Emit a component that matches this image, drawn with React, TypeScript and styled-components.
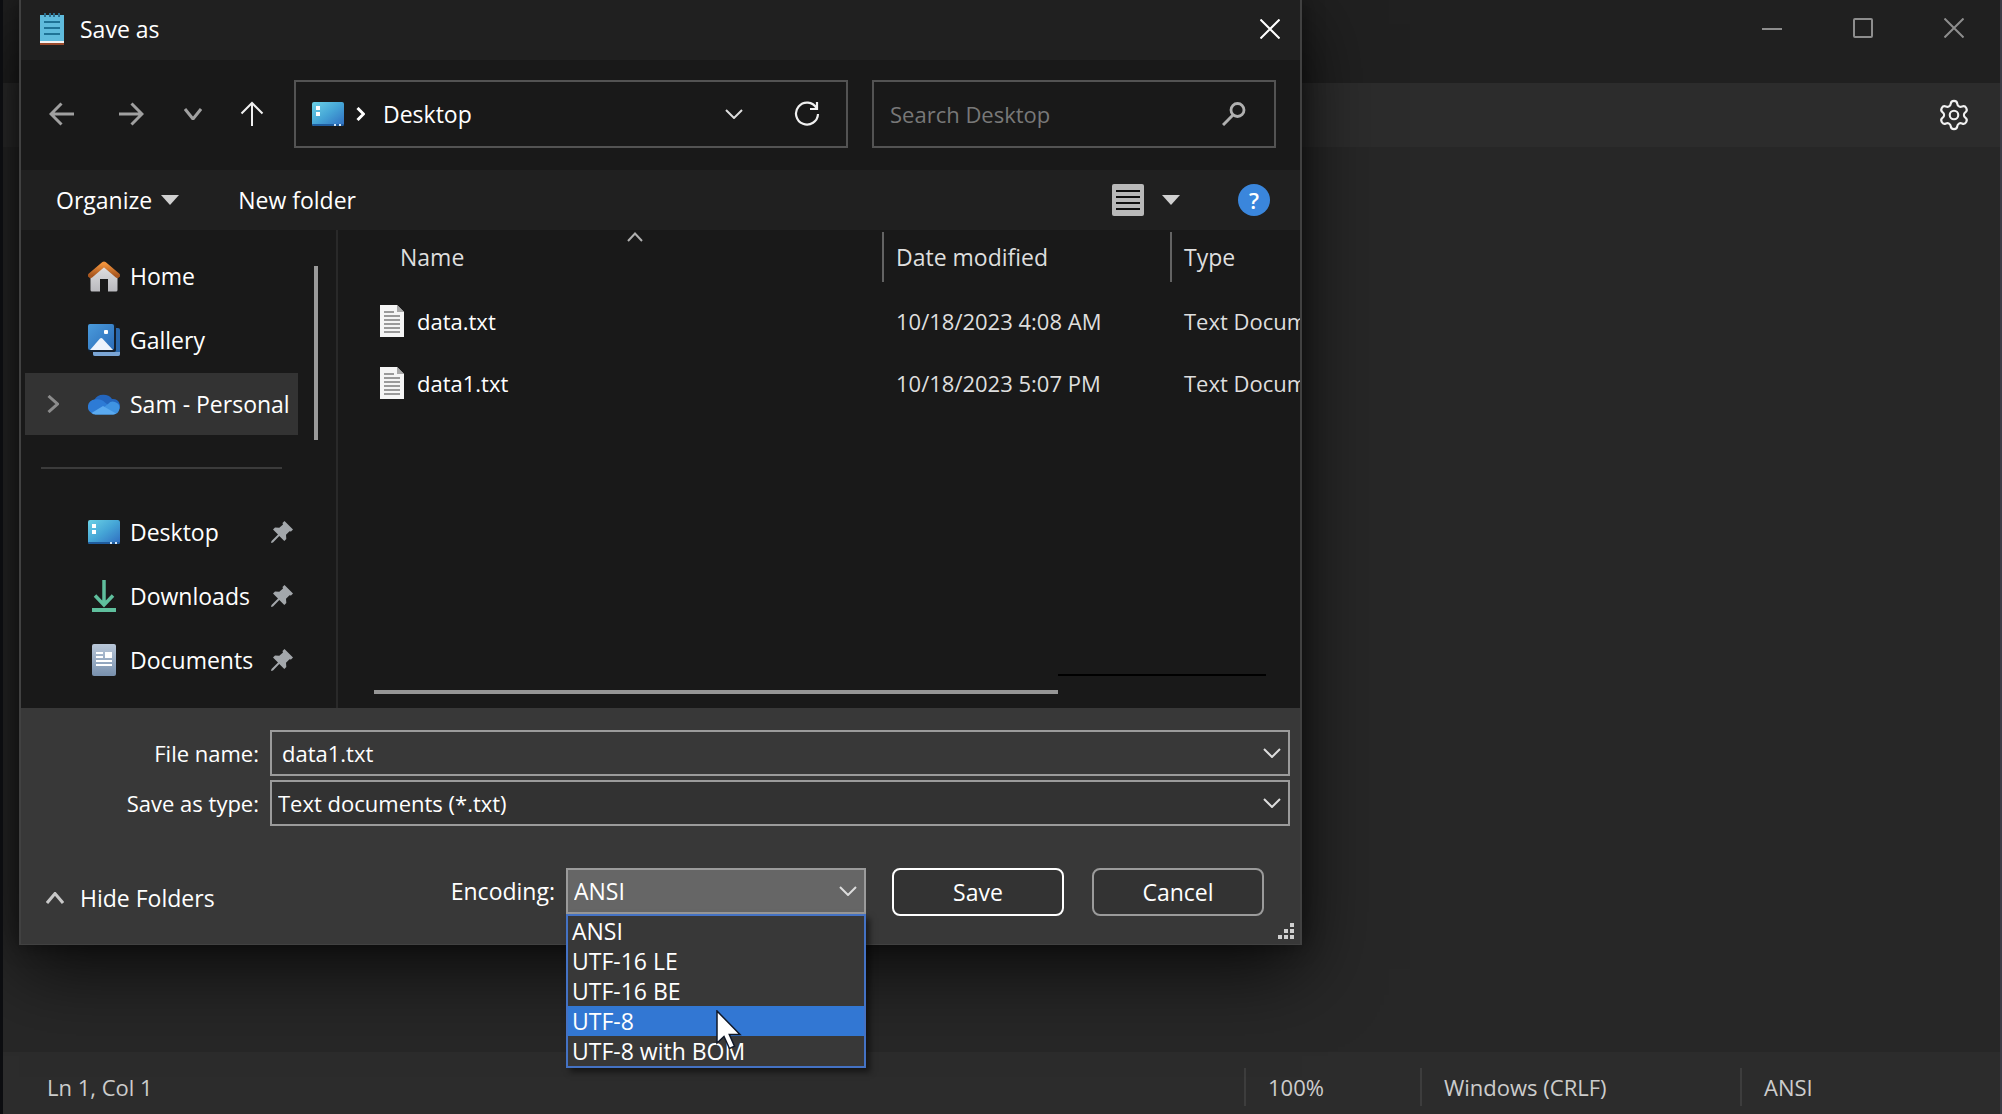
import React, { useState } from "react";
import styled, { createGlobalStyle, css } from "styled-components";
import { Settings } from "lucide-react";

const GlobalStyle = createGlobalStyle`
  *, *::before, *::after { box-sizing: border-box; }
  html, body, #root { height: 100%; }
  body {
    margin: 0;
    background: #272727;
    color: #ffffff;
    font-family: "Open Sans", "Noto Sans", sans-serif;
    font-size: 23px;
    line-height: 30px;
    overflow: hidden;
  }
  button, input, select {
    font: inherit;
    color: inherit;
    margin: 0;
    padding: 0;
    border: 0;
    border-radius: 0;
    background: none;
    outline: none;
  }
  svg { display: block; flex: none; }
`;

/* ---------- Editor window ---------- */

const EditorWindow = styled.div`
  position: relative;
  display: flex;
  flex-direction: column;
  min-height: 100vh;
  border-left: 3px solid #0c0d10;
  border-right: 2px solid #3c3c46;
  background: #272727;
  overflow: hidden;
`;

const EditorTitle = styled.header`
  display: flex;
  justify-content: flex-end;
  gap: 71px;
  height: 83px;
  padding: 18px 36px 0 0;
  background: #202020;
`;

const WindowButton = styled.button`
  width: 20px;
  height: 20px;
  color: #8d8d8d;
`;

const EditorMenu = styled.div`
  display: flex;
  align-items: center;
  justify-content: flex-end;
  height: 64px;
  padding-right: 29px;
  background: #2c2c2c;
`;

const EditorPage = styled.main`
  flex: 1;
`;

const StatusBar = styled.footer`
  display: flex;
  align-items: center;
  height: 62px;
  padding: 8px 0 0 44px;
  background: #2c2c2c;
  color: #cccccc;
  font-size: 22px;
`;

const StatusSpacer = styled.div`
  flex: 1;
`;

const StatusItem = styled.div<{ $width: number }>`
  display: flex;
  align-items: center;
  width: ${(p) => p.$width}px;
  height: 38px;
  padding-left: 22px;
  border-left: 2px solid #3d3d3d;
`;

/* ---------- Dialog frame ---------- */

const Dialog = styled.section`
  position: absolute;
  top: 0;
  left: 16px;
  right: 698px;
  border: 2px solid #414141;
  border-top: 0;
  border-bottom-width: 1px;
  background: #191919;
  box-shadow: 0 24px 72px rgba(0, 0, 0, 0.72), 0 0 20px rgba(0, 0, 0, 0.4);
`;

const TitleBar = styled.header`
  display: flex;
  align-items: center;
  gap: 16px;
  height: 60px;
  padding: 0 19px 2px 19px;
  background: #202020;
`;

const DialogTitle = styled.h1`
  flex: 1;
  margin: 0;
  font-size: inherit;
  font-weight: 400;
`;

const IconButton = styled.button<{ $width: number }>`
  display: flex;
  flex: none;
  align-items: center;
  justify-content: center;
  width: ${(p) => p.$width}px;
  height: 40px;
`;

const NavBar = styled.div`
  display: flex;
  align-items: center;
  height: 110px;
  padding: 0 24px 2px 25px;
`;

const NavButtons = styled.div`
  display: flex;
  align-items: center;
  gap: 37px;
`;

const boxFrame = css`
  display: flex;
  align-items: center;
  height: 68px;
  border: 2px solid #535353;
`;

const AddressBox = styled.div`
  ${boxFrame}
  flex: 1;
  margin: 0 24px 0 29px;
  padding: 0 5px 0 16px;
  gap: 12px;
`;

const Crumb = styled.a`
  flex: 1;
  margin-left: 6px;
  color: inherit;
  text-decoration: none;
`;

const SearchBox = styled.label`
  ${boxFrame}
  flex: none;
  width: 404px;
  padding: 0 28px 0 16px;
`;

const SearchInput = styled.input`
  flex: 1;
  min-width: 0;
  font-size: 22px;
  &::placeholder { color: #787878; opacity: 1; }
`;

const Toolbar = styled.div`
  display: flex;
  align-items: center;
  height: 60px;
  padding: 0 30px 0 35px;
  background: #202020;
`;

const ToolButton = styled.button`
  display: flex;
  align-items: center;
  gap: 9px;
  margin-right: 59px;
`;

const ToolSpacer = styled.div`
  flex: 1;
`;

const ViewButton = styled.button`
  display: flex;
  align-items: center;
  gap: 18px;
  margin-right: 58px;
`;

/* ---------- Folder tree ---------- */

const Browser = styled.div`
  display: flex;
`;

const Sidebar = styled.nav`
  display: flex;
  flex: none;
  gap: 16px;
  width: 317px;
  padding: 0 18px 0 4px;
  border-right: 2px solid #292929;
`;

const FolderList = styled.div`
  display: flex;
  flex-direction: column;
  flex: 1;
  gap: 2px;
  padding: 15px 0 17px;
`;

const Folder = styled.button<{ $active?: boolean }>`
  display: flex;
  align-items: center;
  height: 62px;
  padding: 0 5px 0 22px;
  text-align: left;
  white-space: nowrap;
  background: ${(p) => (p.$active ? "#333333" : "transparent")};
`;

const Expander = styled.span`
  width: 41px;
`;

const FolderName = styled.span`
  flex: 1;
  margin-left: 10px;
`;

const Separator = styled.div`
  display: flex;
  align-items: center;
  height: 62px;
  padding: 0 16px;
  &::before {
    content: "";
    flex: 1;
    height: 2px;
    background: #3b3b3b;
  }
`;

const SideThumb = styled.div`
  width: 4px;
  height: 174px;
  margin-top: 36px;
  background: #9a9a9a;
`;

/* ---------- File table ---------- */

const FilePane = styled.div`
  display: flex;
  flex-direction: column;
  flex: 1;
  min-width: 0;
`;

const FileArea = styled.div`
  flex: 1;
  padding-left: 36px;
  overflow: hidden;
`;

const FileTable = styled.table`
  width: 100%;
  min-width: 1098px;
  table-layout: fixed;
  border-collapse: collapse;
  white-space: nowrap;
`;

const Column = styled.col<{ $width: number }>`
  width: ${(p) => p.$width}px;
`;

const HeadCell = styled.th`
  padding: 2px 0 8px;
  font-weight: 400;
`;

const HeadButton = styled.button<{ $indent: number }>`
  position: relative;
  display: block;
  width: 100%;
  height: 50px;
  padding-left: ${(p) => p.$indent}px;
  border-right: 2px solid #636363;
  color: #dedede;
  text-align: left;
`;

const SortMark = styled.span`
  position: absolute;
  top: 0;
  left: 253px;
`;

const Cell = styled.td`
  height: 62px;
  padding: 0 0 0 12px;
  color: #dedede;
  font-size: 22px;
`;

const NameCell = styled(Cell)`
  padding-left: 6px;
  color: #ffffff;
`;

const FileName = styled.span`
  display: flex;
  align-items: center;
  gap: 13px;
`;

const ScrollRow = styled.div`
  display: flex;
  height: 34px;
  padding: 0 34px 0 36px;
`;

const ScrollThumb = styled.div`
  flex: 1;
  height: 4px;
  margin-top: 16px;
  background: #969696;
`;

const ScrollRest = styled.div`
  width: 208px;
  height: 2px;
  background: #000000;
`;

/* ---------- Dialog footer ---------- */

const Footer = styled.form`
  position: relative;
  padding: 22px 10px 28px 25px;
  background: #383838;
`;

const Fields = styled.div`
  display: grid;
  grid-template-columns: 213px 1fr;
  column-gap: 11px;
  row-gap: 4px;
  align-items: center;
  font-size: 22px;
`;

const FieldLabel = styled.label`
  text-align: right;
  white-space: nowrap;
`;

const NameField = styled.div`
  display: flex;
  align-items: center;
  height: 46px;
  padding: 0 7px 0 10px;
  border: 2px solid #9b9b9b;
`;

const NameInput = styled.input`
  flex: 1;
  min-width: 0;
`;

const SelectWrap = styled.div<{ $width?: string }>`
  position: relative;
  width: ${(p) => p.$width ?? "100%"};
`;

const Select = styled.select<{ $open?: boolean }>`
  display: block;
  appearance: none;
  width: 100%;
  height: 46px;
  padding: 0 30px 0 6px;
  border: 2px solid #9b9b9b;
  background: ${(p) => (p.$open ? "#666666" : "#323232")};
`;

const SelectArrow = styled.span`
  position: absolute;
  top: 18px;
  right: 9px;
  pointer-events: none;
`;

const Options = styled.ul`
  position: absolute;
  top: 46px;
  left: 0;
  right: 0;
  z-index: 2;
  margin: 0;
  padding: 0;
  list-style: none;
  border: 2px solid #4472c4;
  background: #383838;
  box-shadow: 4px 4px 6px rgba(0, 0, 0, 0.5);
`;

const Option = styled.li<{ $selected: boolean }>`
  height: 30px;
  padding-left: 4px;
  background: ${(p) => (p.$selected ? "#3277d3" : "transparent")};
`;

const Pointer = styled.span`
  position: absolute;
  top: 94px;
  left: 148px;
`;

const Actions = styled.div`
  display: flex;
  align-items: flex-start;
  margin-top: 42px;
  padding-right: 26px;
`;

const HideFolders = styled.button`
  display: flex;
  align-items: center;
  gap: 16px;
  margin: 15px auto 0 0;
`;

const EncodingLabel = styled.label`
  margin-right: 11px;
  line-height: 46px;
`;

const ActionButton = styled.button<{ $primary?: boolean }>`
  width: 172px;
  height: 48px;
  margin-left: ${(p) => (p.$primary ? 26 : 28)}px;
  border: 2px solid ${(p) => (p.$primary ? "#ffffff" : "#9b9b9b")};
  border-radius: 8px;
  background: #333333;
`;

const Grip = styled.span`
  position: absolute;
  right: 6px;
  bottom: 5px;
`;

const HelpBadge = styled.button`
  width: 32px;
  height: 32px;
  border-radius: 50%;
  background: #3a86dc;
  font-size: 22px;
  font-weight: 600;
  line-height: 32px;
`;

/* ---------- Drawings ---------- */

interface ChevronProps {
  dir: "up" | "down" | "right";
  w?: number;
  h?: number;
  color?: string;
  stroke?: number;
}

const Chevron = ({ dir, w = 18, h = 10, color = "#dddddd", stroke = 2 }: ChevronProps) => {
  const paths = {
    down: `M1 1L${w / 2} ${h - 1}L${w - 1} 1`,
    up: `M1 ${h - 1}L${w / 2} 1.5L${w - 1} ${h - 1}`,
    right: `M1.5 1L${w - 1.5} ${h / 2}L1.5 ${h - 1}`,
  };
  return (
    <svg width={w} height={h} viewBox={`0 0 ${w} ${h}`} fill="none" stroke={color} strokeWidth={stroke}>
      <path d={paths[dir]} />
    </svg>
  );
};

const Arrow = ({ turn, color, stroke }: { turn: number; color: string; stroke: number }) => (
  <svg width="26" height="26" viewBox="0 0 26 26" fill="none" stroke={color} strokeWidth={stroke}>
    <path transform={`rotate(${turn} 13 13)`} d="M25 13H2.5M12.5 2.5L2 13l10.500 10.5" />
  </svg>
);

const Cross = () => (
  <svg width="20" height="20" viewBox="0 0 20 20" stroke="currentColor" strokeWidth="2">
    <path d="M.5.5l19 19M19.5.5l-19 19" />
  </svg>
);

const Triangle = () => (
  <svg width="18" height="10" viewBox="0 0 18 10">
    <path d="M0 0h18L9 10z" fill="#d0d0d0" />
  </svg>
);

const NotepadIcon = () => (
  <svg width="24" height="32" viewBox="0 0 24 32">
    <rect y="2" width="24" height="26" fill="#5fbbdc" />
    <rect y="28" width="24" height="2" fill="#f3f3f3" />
    <rect y="30" width="24" height="2" fill="#9a4a2c" />
    <path d="M5 0v4M10 0v4M14 0v4M19 0v4" stroke="#2d6f8e" strokeWidth="2" />
    <path d="M4 9h16M4 15h16M4 21h16" stroke="#1f7396" strokeWidth="2" />
  </svg>
);

const DesktopIcon = () => (
  <svg width="32" height="24" viewBox="0 0 32 24">
    <defs>
      <linearGradient id="desk" x1="0" y1="0" x2="1" y2="1">
        <stop offset="0" stopColor="#6cd2e6" />
        <stop offset="0.5" stopColor="#45a5d6" />
        <stop offset="1" stopColor="#2f6cc0" />
      </linearGradient>
    </defs>
    <rect width="32" height="24" rx="2" fill="url(#desk)" />
    <path d="M0 22h32a2 2 0 0 1-2 2H2a2 2 0 0 1-2-2z" fill="#1f5c9e" />
    <path d="M4 4h4v4H4zM4 10h4v4H4z" fill="#ffffff" />
    <path d="M22 22h2v2h-2zM27 22h2v2h-2z" fill="#cfe6fa" />
  </svg>
);

const HomeIcon = () => (
  <svg width="32" height="32" viewBox="0 0 32 32">
    <defs>
      <linearGradient id="wall" x1="0" y1="0" x2="0" y2="1">
        <stop offset="0" stopColor="#e4e4e6" />
        <stop offset="1" stopColor="#b9b9bd" />
      </linearGradient>
      <linearGradient id="roof" x1="0" y1="0" x2="0" y2="1">
        <stop offset="0" stopColor="#f0923c" />
        <stop offset="1" stopColor="#a8561f" />
      </linearGradient>
    </defs>
    <path d="M2.5 14L16 3l13.500 11v16a1.500 1.500 0 0 1-1.500 1.500h-8V19h-8v12.500H4A1.500 1.500 0 0 1 2.500 30z" fill="url(#wall)" />
    <path d="M2.500 15.500L16 4l13.500 11.500" fill="none" stroke="url(#roof)" strokeWidth="5" strokeLinecap="round" strokeLinejoin="round" />
  </svg>
);

const GalleryIcon = () => (
  <svg width="32" height="32" viewBox="0 0 32 32">
    <defs>
      <linearGradient id="photo" x1="0" y1="0" x2="1" y2="1">
        <stop offset="0" stopColor="#4a9bdc" />
        <stop offset="1" stopColor="#2b6cb8" />
      </linearGradient>
    </defs>
    <path d="M8 4h22a2 2 0 0 1 2 2v24a2 2 0 0 1-2 2H7a2 2 0 0 1-2-2z" fill="#2a68ac" />
    <path d="M5 28h27v2a2 2 0 0 1-2 2H7a2 2 0 0 1-2-2z" fill="#7ba6d6" />
    <rect width="28" height="28" rx="2" fill="#14202e" />
    <rect width="26" height="26" rx="2" fill="url(#photo)" />
    <rect x="16" y="6" width="4" height="4" rx="1" fill="#ffffff" />
    <path d="M2 26L12 14.500q1.200-1.200 2.400 0L25 26z" fill="#eef4fc" />
  </svg>
);

const CloudIcon = () => (
  <svg width="32" height="22" viewBox="0 0 32 22">
    <path d="M8 20a8 7 0 0 1-1.500-13.500A10 8.500 0 0 1 24 6a7 7 0 0 1 2 14z" fill="#2365bd" />
    <path d="M7 6.500q6-1 10 3l9 7-20 4.500A7.300 7.300 0 0 1 7 6.500z" fill="#2d7bd6" />
    <path d="M6.500 21.500L20 11q3-3.500 7-2a6.400 6.400 0 0 1-2 12.500H8a8 8 0 0 1-4-1z" fill="#3f93e2" />
    <path d="M3.500 20l11.500-7 13 7.500q-1.500 1-3 1H8q-3 0-4.500-1.500z" fill="#5aaaf0" />
  </svg>
);

const DownloadIcon = () => (
  <svg width="32" height="32" viewBox="0 0 32 32" fill="none" stroke="#5fbf9d">
    <path d="M16 0v25M7 15.500l9 9.500 9-9.500" strokeWidth="3.5" />
    <path d="M4 30h24" strokeWidth="4" />
  </svg>
);

const DocumentIcon = () => (
  <svg width="32" height="32" viewBox="0 0 32 32">
    <defs>
      <linearGradient id="doc" x1="0" y1="0" x2="0" y2="1">
        <stop offset="0" stopColor="#b9c7d8" />
        <stop offset="1" stopColor="#7890ad" />
      </linearGradient>
    </defs>
    <rect x="4" width="24" height="32" rx="2" fill="url(#doc)" />
    <path d="M8 9h7M8 13h7M8 17h16M8 21h16" stroke="#ffffff" strokeWidth="2" />
    <rect x="17" y="8" width="7" height="6" fill="#ffffff" />
  </svg>
);

const TextFileIcon = () => (
  <svg width="24" height="32" viewBox="0 0 24 32">
    <path d="M0 0h17l7 7v25H0z" fill="#f5f5f5" />
    <path d="M17 0v7h7z" fill="#a8a8a8" />
    <path d="M4 7h10M4 11h16M4 15h16M4 19h16M4 23h16M4 27h16" stroke="#9a9a9a" strokeWidth="2" />
  </svg>
);

const PinIcon = () => (
  <svg width="22" height="22" viewBox="0 0 22 22">
    <path d="M13.500 0L22 8.500l-2 2-1.500-.3-3.500 3.600.3 4.200-2 2-5-5L2 21.500 0 22l.5-2L7 13.500l-5-5 2-2 4.300.3L12 3.400 11.500 2z" fill="#a3a7ab" />
  </svg>
);

const ViewIcon = () => (
  <svg width="32" height="32" viewBox="0 0 32 32">
    <rect width="32" height="32" rx="2" fill="#b9b9b9" />
    <path d="M4 7h24M4 13h24M4 19h24M4 25h24" stroke="#101010" strokeWidth="2" />
  </svg>
);

const RefreshIcon = () => (
  <svg width="26" height="26" viewBox="0 0 26 26" fill="none" stroke="#f0f0f0" strokeWidth="2.2">
    <path d="M22.500 7A11 11 0 1 0 24 13" />
    <path d="M23 1v7h-7" />
  </svg>
);

const SearchIcon = () => (
  <svg width="24" height="24" viewBox="0 0 24 24" fill="none" stroke="#b0b0b0">
    <circle cx="15.5" cy="8" r="6.5" strokeWidth="2.8" />
    <path d="M11 13L1 23" strokeWidth="3" />
  </svg>
);

const CursorIcon = () => (
  <svg width="26" height="40" viewBox="0 0 26 40">
    <path d="M1 1v32l7-6.500 5.500 12 5-2.300L13.300 24.500H24z" fill="#ffffff" stroke="#101828" strokeWidth="1.5" />
  </svg>
);

/* ---------- Data ---------- */

const pinned = [
  { name: "Desktop", icon: <DesktopIcon /> },
  { name: "Downloads", icon: <DownloadIcon /> },
  { name: "Documents", icon: <DocumentIcon /> },
];

const files = [
  { name: "data.txt", date: "10/18/2023 4:08 AM", type: "Text Document" },
  { name: "data1.txt", date: "10/18/2023 5:07 PM", type: "Text Document" },
];

const encodings = ["ANSI", "UTF-16 LE", "UTF-16 BE", "UTF-8", "UTF-8 with BOM"];

export default function App() {
  const [fileName, setFileName] = useState("data1.txt");
  const [hovered, setHovered] = useState("UTF-8");
  const [encoding, setEncoding] = useState("ANSI");

  return (
    <>
      <GlobalStyle />
      <EditorWindow>
        <EditorTitle>
          <WindowButton aria-label="Minimize">
            <svg width="20" height="20"><path d="M0 11h20" stroke="currentColor" strokeWidth="2" /></svg>
          </WindowButton>
          <WindowButton aria-label="Maximize">
            <svg width="20" height="20"><rect x="1" y="1" width="18" height="18" rx="1" fill="none" stroke="currentColor" strokeWidth="2" /></svg>
          </WindowButton>
          <WindowButton aria-label="Close window"><Cross /></WindowButton>
        </EditorTitle>
        <EditorMenu>
          <IconButton $width={34} aria-label="Settings">
            <Settings size={34} strokeWidth={1.5} color="#f0f0f0" />
          </IconButton>
        </EditorMenu>
        <EditorPage />
        <StatusBar>
          <span>Ln 1, Col 1</span>
          <StatusSpacer />
          <StatusItem $width={176}>100%</StatusItem>
          <StatusItem $width={320}>Windows (CRLF)</StatusItem>
          <StatusItem $width={260}>ANSI</StatusItem>
        </StatusBar>

        <Dialog role="dialog" aria-label="Save as">
          <TitleBar>
            <NotepadIcon />
            <DialogTitle>Save as</DialogTitle>
            <IconButton $width={22} aria-label="Close"><Cross /></IconButton>
          </TitleBar>

          <NavBar>
            <NavButtons>
              <IconButton $width={32} aria-label="Back"><Arrow turn={0} color="#a0a0a0" stroke={3} /></IconButton>
              <IconButton $width={32} aria-label="Forward"><Arrow turn={180} color="#a0a0a0" stroke={3} /></IconButton>
              <IconButton $width={18} aria-label="Recent locations"><Chevron dir="down" color="#a0a0a0" stroke={3} h={12} /></IconButton>
              <IconButton $width={26} aria-label="Up"><Arrow turn={90} color="#f0f0f0" stroke={2} /></IconButton>
            </NavButtons>
            <AddressBox>
              <DesktopIcon />
              <Chevron dir="right" w={9} h={14} color="#ffffff" stroke={3} />
              <Crumb href="#desktop">Desktop</Crumb>
              <IconButton $width={54} aria-label="Previous locations"><Chevron dir="down" /></IconButton>
              <IconButton $width={68} aria-label="Refresh"><RefreshIcon /></IconButton>
            </AddressBox>
            <SearchBox>
              <SearchInput type="text" placeholder="Search Desktop" aria-label="Search Desktop" />
              <SearchIcon />
            </SearchBox>
          </NavBar>

          <Toolbar>
            <ToolButton>Organize <Triangle /></ToolButton>
            <ToolButton>New folder</ToolButton>
            <ToolSpacer />
            <ViewButton aria-label="Change view"><ViewIcon /><Triangle /></ViewButton>
            <HelpBadge>?</HelpBadge>
          </Toolbar>

          <Browser>
            <Sidebar>
              <FolderList>
                <Folder><Expander /><HomeIcon /><FolderName>Home</FolderName></Folder>
                <Folder><Expander /><GalleryIcon /><FolderName>Gallery</FolderName></Folder>
                <Folder $active>
                  <Expander><Chevron dir="right" w={12} h={18} color="#8c8c8c" stroke={3} /></Expander>
                  <CloudIcon />
                  <FolderName>Sam - Personal</FolderName>
                </Folder>
                <Separator />
                {pinned.map((p) => (
                  <Folder key={p.name}><Expander />{p.icon}<FolderName>{p.name}</FolderName><PinIcon /></Folder>
                ))}
              </FolderList>
              <SideThumb />
            </Sidebar>

            <FilePane>
              <FileArea>
                <FileTable>
                  <colgroup><Column $width={510} /><Column $width={288} /><Column $width={300} /></colgroup>
                  <thead>
                    <tr>
                      <HeadCell scope="col">
                        <HeadButton $indent={26}>Name<SortMark><Chevron dir="up" w={16} color="#b0b0b0" /></SortMark></HeadButton>
                      </HeadCell>
                      <HeadCell scope="col"><HeadButton $indent={12}>Date modified</HeadButton></HeadCell>
                      <HeadCell scope="col"><HeadButton $indent={12}>Type</HeadButton></HeadCell>
                    </tr>
                  </thead>
                  <tbody>
                    {files.map((f) => (
                      <tr key={f.name}>
                        <NameCell><FileName><TextFileIcon />{f.name}</FileName></NameCell>
                        <Cell>{f.date}</Cell>
                        <Cell>{f.type}</Cell>
                      </tr>
                    ))}
                  </tbody>
                </FileTable>
              </FileArea>
              <ScrollRow><ScrollThumb /><ScrollRest /></ScrollRow>
            </FilePane>
          </Browser>

          <Footer onSubmit={(e) => e.preventDefault()}>
            <Fields>
              <FieldLabel htmlFor="file-name">File name:</FieldLabel>
              <NameField>
                <NameInput id="file-name" type="text" value={fileName} onChange={(e) => setFileName(e.target.value)} />
                <IconButton type="button" $width={18} aria-label="Recent names"><Chevron dir="down" /></IconButton>
              </NameField>
              <FieldLabel htmlFor="file-type">Save as type:</FieldLabel>
              <SelectWrap>
                <Select id="file-type"><option>Text documents (*.txt)</option></Select>
                <SelectArrow><Chevron dir="down" /></SelectArrow>
              </SelectWrap>
            </Fields>
            <Actions>
              <HideFolders type="button"><Chevron dir="up" h={12} stroke={3} color="#c8c8c8" />Hide Folders</HideFolders>
              <EncodingLabel htmlFor="encoding">Encoding:</EncodingLabel>
              <SelectWrap $width="300px">
                <Select id="encoding" $open value={encoding} onChange={(e) => setEncoding(e.target.value)}>
                  {encodings.map((e) => <option key={e}>{e}</option>)}
                </Select>
                <SelectArrow><Chevron dir="down" /></SelectArrow>
                <Options role="listbox" aria-label="Encoding">
                  {encodings.map((e) => (
                    <Option
                      key={e}
                      role="option"
                      aria-selected={e === hovered}
                      $selected={e === hovered}
                      onMouseEnter={() => setHovered(e)}
                      onClick={() => setEncoding(e)}
                    >
                      {e}
                    </Option>
                  ))}
                  <Pointer><CursorIcon /></Pointer>
                </Options>
              </SelectWrap>
              <ActionButton type="submit" $primary>Save</ActionButton>
              <ActionButton type="button">Cancel</ActionButton>
            </Actions>
            <Grip>
              <svg width="16" height="16" fill="#cfcfcf">
                <path d="M12 0h4v4h-4zM6 6h4v4H6zM12 6h4v4h-4zM0 12h4v4H0zM6 12h4v4H6zM12 12h4v4h-4z" />
              </svg>
            </Grip>
          </Footer>
        </Dialog>
      </EditorWindow>
    </>
  );
}
